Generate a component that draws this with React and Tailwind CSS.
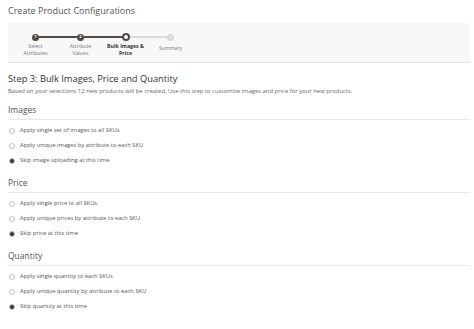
import React from 'react'

const steps = [
  { n: 1, label: ['Select', 'Attributes'], state: 'done' },
  { n: 2, label: ['Attribute', 'Values'], state: 'done' },
  { n: 3, label: ['Bulk Images &', 'Price'], state: 'current' },
  { n: 4, label: ['Summary'], state: 'todo' },
]

const sections = [
  {
    title: 'Images',
    options: [
      'Apply single set of images to all SKUs',
      'Apply unique images by attribute to each SKU',
      'Skip image uploading at this time',
    ],
  },
  {
    title: 'Price',
    options: [
      'Apply single price to all SKUs',
      'Apply unique prices by attribute to each SKU',
      'Skip price at this time',
    ],
  },
  {
    title: 'Quantity',
    options: [
      'Apply single quantity to each SKUs',
      'Apply unique quantity by attribute to each SKU',
      'Skip quantity at this time',
    ],
  },
]

function Step({ step, index }) {
  const leftDark = index > 0 && index <= 2
  const rightDark = index < 2
  return (
    <div className="w-[45px] flex flex-col items-center">
      <div className="flex items-center w-full h-[8px]">
        <div className={`flex-1 h-[2px] ${index === 0 ? '' : leftDark ? 'bg-[#514943]' : 'bg-[#d9d9d9]'}`} />
        {step.state === 'done' && (
          <div className="w-[7px] h-[7px] rounded-full bg-[#514943] flex items-center justify-center text-white text-[4px] font-bold leading-none">
            {step.n}
          </div>
        )}
        {step.state === 'current' && (
          <div className="w-[8px] h-[8px] rounded-full border-[2px] border-[#514943] bg-white" />
        )}
        {step.state === 'todo' && (
          <div className="w-[7px] h-[7px] rounded-full bg-[#d9d9d9] flex items-center justify-center text-[#f2f2f2] text-[4px] leading-none">
            {step.n}
          </div>
        )}
        <div className={`flex-1 h-[2px] ${index === 3 ? '' : rightDark ? 'bg-[#514943]' : 'bg-[#d9d9d9]'}`} />
      </div>
      <div
        className={`text-center text-[5.2px] leading-[6.5px] whitespace-nowrap ${
          step.state === 'current' ? 'font-bold text-[#333]' : 'text-[#777]'
        } ${step.state === 'todo' ? 'mt-[4px]' : 'mt-[2px]'}`}
      >
        {step.label.map((l) => (
          <div key={l}>{l}</div>
        ))}
      </div>
    </div>
  )
}

function Radio({ checked, label }) {
  return (
    <div className="flex items-center h-[15px]">
      {checked ? (
        <div className="w-[6px] h-[6px] rounded-full border border-[#adadad] bg-white flex items-center justify-center ml-[1px]">
          <div className="w-[4px] h-[4px] rounded-full bg-[#333]" />
        </div>
      ) : (
        <div className="w-[6px] h-[6px] rounded-full border border-[#c2c2c2] bg-white ml-[1px]" />
      )}
      <span className="ml-[5px] text-[5.8px] text-[#555]">{label}</span>
    </div>
  )
}

export default function App() {
  return (
    <div
      className="w-[474px] h-[329px] overflow-hidden bg-white pl-2 pr-1"
      style={{ fontFamily: '"Open Sans", "Liberation Sans", sans-serif' }}
    >
      <h1 className="pt-[4px] text-[9px] leading-[14px] text-[#555]">Create Product Configurations</h1>

      {/* Stepper */}
      <div className="mt-[5px] h-[40px] bg-[#f8f8f8] border-b border-[#e3e3e3] pl-[5px] pt-[10px] flex">
        {steps.map((s, i) => (
          <Step key={s.n} step={s} index={i} />
        ))}
      </div>

      <h2 className="mt-[9px] text-[9.3px] leading-[14px] text-[#333]">Step 3: Bulk Images, Price and Quantity</h2>
      <p className="mt-[1px] text-[5.9px] leading-[8px] text-[#666]">
        Based on your selections 12 new products will be created. Use this step to customize images and price for your
        new products.
      </p>

      {sections.map((sec) => (
        <div key={sec.title} className="mt-[9px]">
          <div className="text-[8.5px] leading-[12px] text-[#555] pb-[3px] border-b border-[#e8e8e8]">{sec.title}</div>
          <div className="mt-[3px]">
            {sec.options.map((o, i) => (
              <Radio key={o} label={o} checked={i === 2} />
            ))}
          </div>
        </div>
      ))}
    </div>
  )
}
